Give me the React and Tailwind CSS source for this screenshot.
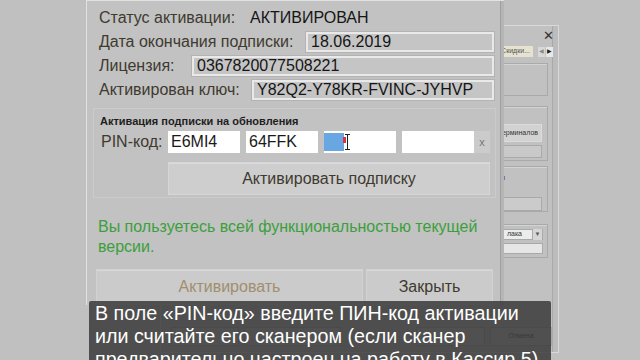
import React from 'react';

const Field = ({ label, labelClass, value, boxed = true }) => (
  <div className="flex h-5 items-center pl-[6px] pr-[4px]">
    <span className={`shrink-0 text-[#3e3a2f] ${labelClass}`}>{label}</span>
    {boxed ? (
      <div className="flex h-5 flex-1 items-center border-2 border-[#e9e9e9] bg-[#c5c5c5] pl-[3px] text-[#151515] shadow-[0_0_0_1px_#b3b3b3]">
        {value}
      </div>
    ) : (
      <span className="text-[#151515]">{value}</span>
    )}
  </div>
);

const PinBox = ({ value, children }) => (
  <div className="relative flex h-[22px] w-[72px] items-center bg-white pl-[3px] text-[#1a1a1a]">
    {value}
    {children}
  </div>
);

// the window that sits behind the activation dialog
const BackWindow = () => (
  <div className="absolute left-[160px] top-[25px] flex h-[328px] w-[399px] flex-col border border-[#d9d9d9] bg-[#c1c1c1] shadow-[inset_-5px_0_0_#bcbcbc,inset_-6px_0_0_#a9a9a9]">
    <div className="flex h-[20px] items-center justify-end pr-[4px] text-[13px] text-[#333]">✕</div>
    <div className="flex h-[11px] items-center justify-end pr-[5px]">
      <div className="flex h-[11px] w-[36px] items-center justify-end bg-[#e6e2cf] pr-[3px] text-[7px] text-[#555]">Скидки...</div>
      <div className="ml-[5px] flex h-[10px] items-center gap-[1px]">
        <div className="flex h-[10px] w-[7px] items-center justify-center bg-[#d8d8d8] text-[6px] text-[#888]">◀</div>
        <div className="flex h-[10px] w-[7px] items-center justify-center bg-[#e8e8e8] text-[6px] text-[#222]">▶</div>
      </div>
    </div>
    <div className="ml-auto mr-[10px] mt-[6px] flex w-[150px] flex-col">
      <div className="h-[33px] border border-[#a9a9a9] shadow-[inset_1px_1px_0_#d3d3d3]" />
      <div className="mt-[10px] flex h-[55px] flex-col items-end border border-[#a9a9a9] pr-[5px] pt-[17px] shadow-[inset_1px_1px_0_#d3d3d3]">
        <div className="flex h-[18px] w-[120px] items-center justify-end border border-[#dcdcdc] bg-[#d2d2d2] pr-[3px] text-[7px] text-[#333]">терминалов</div>
        <div className="mt-[3px] h-[13px] w-[120px] border border-[#a9a9a9] bg-[#c9c9c9]" />
      </div>
      <div className="mt-[5px] flex h-[46px] flex-col items-end border border-[#a9a9a9] pr-[5px] pt-[6px] shadow-[inset_1px_1px_0_#d3d3d3]">
        <div className="w-[42px] text-left text-[7px] text-[#333]">ы</div>
        <div className="mt-[13px] h-[14px] w-[120px] border border-[#a9a9a9] bg-[#cbcbcb]" />
      </div>
      <div className="mt-[12px] flex h-[34px] flex-col items-end border border-[#a9a9a9] pr-[4px] pt-[4px] shadow-[inset_1px_1px_0_#d3d3d3]">
        <div className="flex h-[11px] w-[121px] items-center justify-end border border-[#a9a9a9] bg-[#ececec]">
          <span className="pr-[10px] text-[7px] text-[#333]">лака</span>
          <span className="flex h-[11px] w-[10px] items-center justify-center border-l border-[#aaa] bg-[#d6d6d6] text-[6px] text-[#555]">▼</span>
        </div>
        <div className="mt-[3px] h-[11px] w-[121px] border border-[#a9a9a9] bg-[#e6e6e6]" />
      </div>
    </div>
    <div className="mt-auto mb-[6px] flex items-center gap-[5px] pl-[10px] pr-[6px]">
      <div className="h-[19px] w-[68px] border border-[#a9a9a9] bg-[#cdcdcd]" />
      <div className="h-[19px] w-[97px] border border-[#a9a9a9] bg-[#cdcdcd]" />
      <div className="flex-1" />
      <div className="h-[19px] w-[69px] border border-[#a9a9a9] bg-[#cdcdcd]" />
      <div className="flex h-[19px] w-[62px] items-center justify-center border border-[#a9a9a9] bg-[#cdcdcd] text-[7px] text-[#333]">Отмена</div>
    </div>
  </div>
);

const App = () => {
  return (
    <div className="relative h-[360px] w-[640px] overflow-hidden bg-[#c0c0c0] font-['Liberation_Sans',Arial,sans-serif]">
      <BackWindow />

      {/* activation dialog */}
      <div className="absolute left-[86px] top-0 flex h-[305px] w-[418px] flex-col overflow-hidden border-l border-t border-[#e2e2e2] bg-[#c2c2c2] px-[6px] pt-[7px] text-[16px] shadow-[inset_-3px_0_0_#b6b6b6,inset_-4px_0_0_#9e9e9e]">
        <div className="flex flex-col gap-[4px]">
          <Field label="Статус активации:" labelClass="w-[151px]" value="АКТИВИРОВАН" boxed={false} />
          <Field label="Дата окончания подписки:" labelClass="w-[207px]" value="18.06.2019" />
          <Field label="Лицензия:" labelClass="w-[93px]" value="0367820077508221" />
          <Field label="Активирован ключ:" labelClass="w-[153px]" value="Y82Q2-Y78KR-FVINC-JYHVP" />
        </div>

        {/* group box */}
        <div className="mt-[8px] mr-[2px] flex h-[91px] flex-col border border-[#cbcbcb] pl-[6px] pt-[5px]">
          <div className="h-[14px] text-[11px] font-bold leading-[14px] text-[#1e1e1e]">Активация подписки на обновления</div>
          <div className="mt-[3px] flex h-[22px] items-center">
            <span className="w-[68px] shrink-0 pl-[1px] text-[#3e3a2f]">PIN-код:</span>
            <div className="flex items-center gap-[6px]">
              <PinBox value="E6MI4" />
              <PinBox value="64FFK" />
              <PinBox>
                <div className="absolute left-0 top-[2px] h-[18px] w-[20px] bg-[#69a7e2]" />
                <div className="absolute left-[19px] top-[6px] h-[6px] w-[3px] bg-[#e0303a]" />
                <div className="absolute left-[21px] top-[3px] flex h-[16px] flex-col items-center">
                  <div className="h-[1px] w-[5px] bg-[#222]" />
                  <div className="h-[14px] w-[1px] bg-[#222]" />
                  <div className="h-[1px] w-[5px] bg-[#222]" />
                </div>
              </PinBox>
              <div className="flex items-center">
                <PinBox />
                <div className="flex h-[22px] w-[16px] items-center justify-center bg-[#cbcbcb] text-[11px] text-[#777]">x</div>
              </div>
            </div>
          </div>
          <div className="ml-[68px] mt-[9px] flex h-[33px] w-[322px] items-center justify-center border border-[#d6d6d6] bg-[#cecece] text-[#3e3a2f] shadow-[inset_0_1px_0_#dcdcdc]">
            Активировать подписку
          </div>
        </div>

        <p className="mt-[19px] pl-[5px] pr-[10px] leading-[20px] text-[#3b9f3b]">
          Вы пользуетесь всей функциональностью текущей версии.
        </p>

        <div className="mt-[12px] flex gap-[3px] pl-[3px]">
          <div className="flex h-9 w-[267px] items-center justify-center border border-[#d2d2d2] bg-[#cbcbcb] text-[#a08f6e] shadow-[inset_0_1px_0_#d8d8d8]">
            Активировать
          </div>
          <div className="flex h-9 w-[127px] items-center justify-center border border-[#d2d2d2] bg-[#cbcbcb] text-[#3e3a2f] shadow-[inset_0_1px_0_#d8d8d8]">
            Закрыть
          </div>
        </div>
      </div>

      {/* subtitle overlay */}
      <div className="absolute left-[89px] top-[301px] h-[70px] w-[462px] rounded-[2px] bg-[#3a3a3a]/85 pl-[6px] pt-[1px] text-[19.7px] leading-[23px] text-white">
        <p>В поле «PIN-код» введите ПИН-код активации</p>
        <p>или считайте его сканером (если сканер</p>
        <p>предварительно настроен на работу в Кассир 5)</p>
      </div>
    </div>
  );
};

export default App;
